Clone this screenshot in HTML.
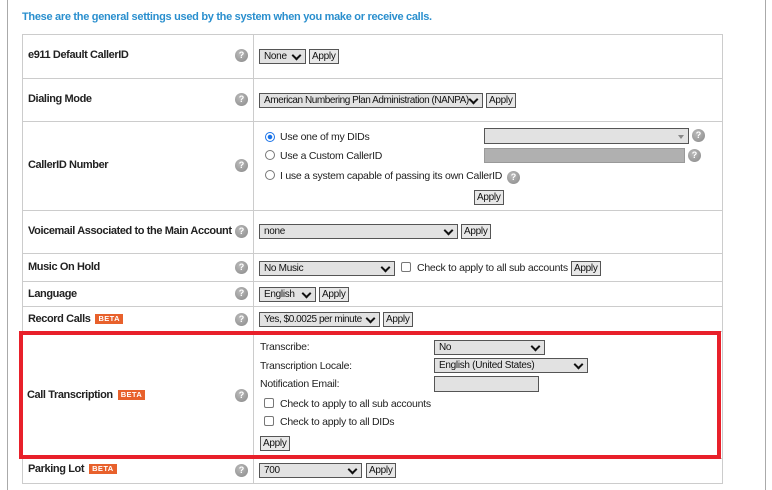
<!DOCTYPE html>
<html><head><style>
*{box-sizing:border-box;margin:0;padding:0}
body{width:772px;height:490px;background:#fff;position:relative;overflow:hidden;font-family:"Liberation Sans",Arial,sans-serif;font-size:11px;color:#222}
.a{position:absolute;white-space:nowrap}
.vl{position:absolute;top:0;height:490px;width:1px;background:#aaa}
.hl{position:absolute;left:22px;width:700px;height:1px;background:#ccc}
.lbl{position:absolute;left:28px;font-weight:bold;font-size:11px;color:#222;white-space:nowrap;letter-spacing:-0.4px}
.q{position:absolute;width:13px;height:13px;border-radius:50%;background:radial-gradient(circle at 40% 35%,#bbb,#888);color:#fff;font-size:9px;font-weight:bold;text-align:center;line-height:13px}
.sel{position:absolute;height:15px;border:1px solid #555;background:#e2e2e2;font-size:10px;line-height:13px;padding-left:4px;padding-right:16px;color:#111;white-space:nowrap;overflow:hidden;letter-spacing:-0.3px}
.sel:after{content:"";position:absolute;right:5px;top:2px;width:5px;height:5px;border-right:2px solid #111;border-bottom:2px solid #111;transform:rotate(45deg)}
.btn{position:absolute;height:15px;border:1px solid #555;background:#e8e8e8;font-size:10px;line-height:13px;padding:0 2px;color:#111;letter-spacing:-0.3px}
.beta{display:inline-block;background:#e8612c;color:#fff;font-size:7.5px;font-weight:bold;padding:1px 3px 1px;line-height:8px;vertical-align:1px;margin-left:5px;letter-spacing:.4px}
.t{position:absolute;font-size:10.5px;color:#222;white-space:nowrap;letter-spacing:-0.25px}
.rad{position:absolute;width:10px;height:10px;border-radius:50%;border:1px solid #777;background:#fff}
.cb{position:absolute;width:10px;height:10px;border:1px solid #777;border-radius:2px;background:#fff}
</style></head><body>
<div class="vl" style="left:7px"></div>
<div class="vl" style="left:765px"></div>
<div class="a" style="left:22px;top:11px;color:#2a8fce;font-weight:bold;font-size:11px;letter-spacing:-0.3px">These are the general settings used by the system when you make or receive calls.</div>
<div class="a" style="left:22px;top:34px;width:701px;height:450px;border:1px solid #ccc"></div>
<div class="a" style="left:253px;top:34px;width:1px;height:450px;background:#ccc"></div>
<div class="hl" style="top:78px"></div><div class="hl" style="top:121px"></div><div class="hl" style="top:210px"></div><div class="hl" style="top:253px"></div><div class="hl" style="top:281px"></div><div class="hl" style="top:306px"></div><div class="hl" style="top:331px"></div><div class="hl" style="top:458px"></div>

<div class="lbl" style="top:49px">e911 Default CallerID</div><div class="q" style="left:235px;top:49px">?</div>
<div class="sel" style="left:259px;top:49px;width:47px">None</div><div class="btn" style="left:309px;top:49px">Apply</div>

<div class="lbl" style="top:93px">Dialing Mode</div><div class="q" style="left:235px;top:93px">?</div>
<div class="sel" style="left:259px;top:93px;width:224px;letter-spacing:-0.45px">American Numbering Plan Administration (NANPA)</div><div class="btn" style="left:486px;top:93px">Apply</div>

<div class="lbl" style="top:159px">CallerID Number</div><div class="q" style="left:235px;top:159px">?</div>
<div class="rad" style="left:265px;top:132px;border-color:#1a73e8;background:radial-gradient(circle,#1a73e8 35%,#fff 45%)"></div><div class="t" style="left:280px;top:131px">Use one of my DIDs</div>
<div class="rad" style="left:265px;top:150px"></div><div class="t" style="left:280px;top:150px">Use a Custom CallerID</div>
<div class="rad" style="left:265px;top:170px"></div><div class="t" style="left:280px;top:170px">I use a system capable of passing its own CallerID</div><div class="q" style="left:507px;top:171px">?</div>
<div class="a" style="left:484px;top:128px;width:205px;height:16px;border:1px solid #555;background:#e2e2e2"></div>
<div class="a" style="left:678px;top:135px;border-left:3px solid transparent;border-right:3px solid transparent;border-top:4px solid #888"></div>
<div class="q" style="left:692px;top:129px">?</div>
<div class="a" style="left:484px;top:148px;width:201px;height:15px;border:1px solid #999;background:#b0b0b0"></div>
<div class="q" style="left:688px;top:149px">?</div>
<div class="btn" style="left:474px;top:190px">Apply</div>

<div class="lbl" style="top:225px">Voicemail Associated to the Main Account</div><div class="q" style="left:235px;top:225px">?</div>
<div class="sel" style="left:259px;top:224px;width:199px">none</div><div class="btn" style="left:461px;top:224px">Apply</div>

<div class="lbl" style="top:261px">Music On Hold</div><div class="q" style="left:235px;top:261px">?</div>
<div class="sel" style="left:259px;top:261px;width:136px">No Music</div>
<div class="cb" style="left:401px;top:262px"></div><div class="t" style="left:417px;top:262px">Check to apply to all sub accounts</div><div class="btn" style="left:571px;top:261px">Apply</div>

<div class="lbl" style="top:288px">Language</div><div class="q" style="left:235px;top:287px">?</div>
<div class="sel" style="left:259px;top:287px;width:57px">English</div><div class="btn" style="left:319px;top:287px">Apply</div>

<div class="lbl" style="top:313px">Record Calls<span class="beta">BETA</span></div><div class="q" style="left:235px;top:313px">?</div>
<div class="sel" style="left:259px;top:312px;width:121px;letter-spacing:-0.45px">Yes, $0.0025 per minute</div><div class="btn" style="left:383px;top:312px">Apply</div>

<div class="lbl" style="left:27px;top:389px">Call Transcription<span class="beta">BETA</span></div><div class="q" style="left:235px;top:389px">?</div>
<div class="t" style="left:260px;top:341px">Transcribe:</div><div class="sel" style="left:434px;top:340px;width:111px">No</div>
<div class="t" style="left:260px;top:360px">Transcription Locale:</div><div class="sel" style="left:434px;top:358px;width:154px">English (United States)</div>
<div class="t" style="left:260px;top:378px">Notification Email:</div><div class="a" style="left:434px;top:376px;width:105px;height:16px;border:1px solid #555;background:#e2e2e2"></div>
<div class="cb" style="left:264px;top:398px"></div><div class="t" style="left:280px;top:398px">Check to apply to all sub accounts</div>
<div class="cb" style="left:264px;top:416px"></div><div class="t" style="left:280px;top:416px">Check to apply to all DIDs</div>
<div class="btn" style="left:260px;top:436px">Apply</div>

<div class="lbl" style="top:463px">Parking Lot<span class="beta">BETA</span></div><div class="q" style="left:235px;top:464px">?</div>
<div class="sel" style="left:259px;top:463px;width:103px">700</div><div class="btn" style="left:366px;top:463px">Apply</div>

<div class="a" style="left:19px;top:331px;width:702px;height:128px;border:4px solid #e8202a"></div>
</body></html>
